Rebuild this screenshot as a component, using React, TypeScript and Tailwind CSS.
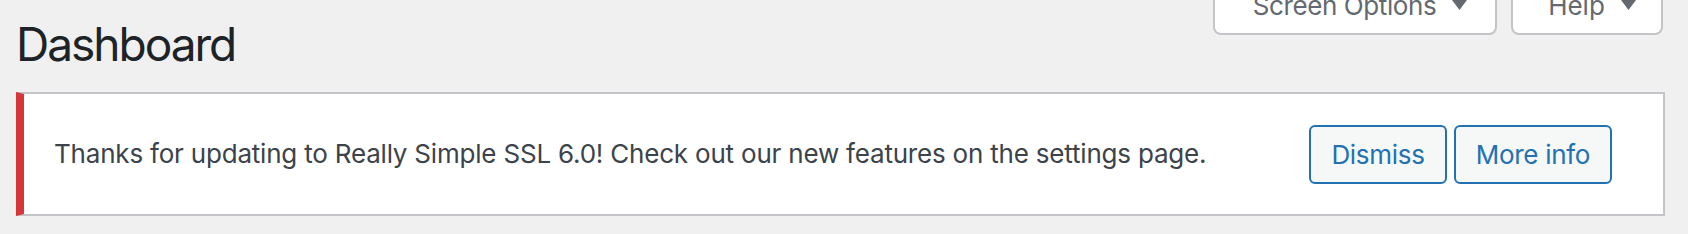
import React from "react";

function Caret() {
  return (
    <svg width="15" height="10" viewBox="0 0 15 10" className="shrink-0" aria-hidden>
      <path d="M0 0 H15 L7.5 10 Z" fill="#646970" />
    </svg>
  );
}

export default function App() {
  return (
    <div className="w-[1688px] h-[234px] overflow-hidden bg-[#f0f0f1] font-['Inter','Liberation_Sans',sans-serif]">
      <div className="flex items-start justify-between pl-[16px] pr-[25px]">
        <h1 className="mt-[14px] text-[46px] leading-[60px] font-normal text-[#1d2327] tracking-[-2px]">
          Dashboard
        </h1>
        <div className="flex h-[35px] items-end gap-[14px]">
          <button className="flex h-[58px] w-[284px] shrink-0 items-center justify-center gap-[16px] rounded-b-[8px] border-2 border-t-0 border-[#c3c4c7] bg-white pl-[10px] text-[26px] text-[#646970] tracking-[-0.4px]">
            <span>Screen Options</span>
            <Caret />
          </button>
          <button className="flex h-[58px] w-[152px] shrink-0 items-center justify-center gap-[16px] rounded-b-[8px] border-2 border-t-0 border-[#c3c4c7] bg-white pl-[10px] text-[26px] text-[#646970]">
            <span>Help</span>
            <Caret />
          </button>
        </div>
      </div>
      <div className="ml-[16px] mr-[23px] mt-[18px] flex h-[124px] items-center justify-between border-2 border-l-[8px] border-[#c3c4c7] border-l-[#d63638] bg-white pl-[30px] pr-[51px]">
        <p className="text-[26px] leading-[36px] text-[#3c434a] tracking-[-0.2px]">
          Thanks for updating to Really Simple SSL 6.0! Check out our new features on the settings page.
        </p>
        <div className="flex gap-[7px]">
          <button className="flex h-[59px] w-[138px] items-center justify-center rounded-[6px] border-2 border-[#2271b1] bg-[#f6f7f7] text-[26px] text-[#2271b1] tracking-[-0.3px]">
            Dismiss
          </button>
          <button className="flex h-[59px] w-[158px] items-center justify-center rounded-[6px] border-2 border-[#2271b1] bg-[#f6f7f7] text-[26px] text-[#2271b1] tracking-[-0.3px]">
            More info
          </button>
        </div>
      </div>
    </div>
  );
}
